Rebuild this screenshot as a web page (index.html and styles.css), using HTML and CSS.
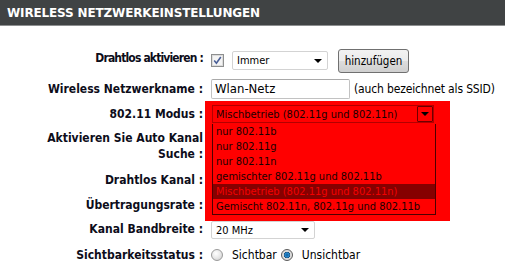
FILE: index.html
```html
<!DOCTYPE html>
<html lang="de">
<head>
<meta charset="utf-8">
<title>Wireless Netzwerkeinstellungen</title>
<link rel="stylesheet" href="styles.css">
</head>
<body>
<div class="header">WIRELESS NETZWERKEINSTELLUNGEN</div>
<div class="form">
  <div class="row r1">
    <div class="label tight">Drahtlos aktivieren :</div>
    <div class="ctrl">
      <span class="checkbox"><svg width="13" height="13" viewBox="0 0 13 13"><rect x="0.5" y="0.5" width="12" height="12" fill="#f4f4f4" stroke="#8e8f8f"/><rect x="1.5" y="1.5" width="10" height="10" fill="none" stroke="#dcdcdc"/><path d="M3.2 6.6 L5.4 9.2 L9.8 3" fill="none" stroke="#4a5f97" stroke-width="1.6"/></svg></span>
      <span class="select sel-immer"><span class="sel-text">Immer</span><span class="arrow"></span></span>
      <span class="button">hinzufügen</span>
    </div>
  </div>
  <div class="row r2">
    <div class="label">Wireless Netzwerkname :</div>
    <div class="ctrl">
      <span class="textbox">Wlan-Netz</span>
      <span class="hint">(auch bezeichnet als SSID)</span>
    </div>
  </div>
  <div class="row r3">
    <div class="label">802.11 Modus :</div>
    <div class="ctrl mode-cell">
      <div class="popup">
        <div class="mode-select"><span class="sel-text">Mischbetrieb (802.11g und 802.11n)</span><span class="mode-btn"><span class="arrow"></span></span></div>
        <ul class="mode-list">
          <li>nur 802.11b</li>
          <li>nur 802.11g</li>
          <li>nur 802.11n</li>
          <li>gemischter 802.11g und 802.11b</li>
          <li class="active">Mischbetrieb (802.11g und 802.11n)</li>
          <li>Gemischt 802.11n, 802.11g und 802.11b</li>
        </ul>
      </div>
    </div>
  </div>
  <div class="row r4">
    <div class="label">Aktivieren Sie Auto Kanal Suche :</div>
    <div class="ctrl"></div>
  </div>
  <div class="row r5">
    <div class="label">Drahtlos Kanal :</div>
    <div class="ctrl"></div>
  </div>
  <div class="row r6">
    <div class="label">Übertragungsrate :</div>
    <div class="ctrl"></div>
  </div>
  <div class="row r7">
    <div class="label">Kanal Bandbreite :</div>
    <div class="ctrl">
      <span class="select sel-mhz"><span class="sel-text">20 MHz</span><span class="arrow"></span></span>
    </div>
  </div>
  <div class="row r8">
    <div class="label">Sichtbarkeitsstatus :</div>
    <div class="ctrl">
      <span class="radio"></span><span class="radio-label">Sichtbar</span>
      <span class="radio checked"></span><span class="radio-label">Unsichtbar</span>
    </div>
  </div>
</div>
</body>
</html>
```

FILE: styles.css
```css
html, body {
  margin: 0;
  padding: 0;
  background: #ffffff;
  width: 505px;
  height: 280px;
  overflow: hidden;
  font-family: "DejaVu Sans Condensed", "DejaVu Sans", sans-serif;
  color: #000;
}

.header {
  height: 25px;
  line-height: 26px;
  background: #404344;
  border-bottom: 1px solid #8d8f90;
  color: #ffffff;
  font-family: "DejaVu Sans", sans-serif;
  font-weight: bold;
  font-size: 12px;
  padding-left: 7px;
  letter-spacing: -0.15px;
  white-space: nowrap;
}

.form {
  padding-top: 20px;
}

.row {
  display: grid;
  grid-template-columns: 205px 1fr;
  align-items: center;
}

.r1 { height: 29px; }
.r2 { height: 28px; }
.r3 { height: 21px; }
.r4 { height: 44px; }
.r5 { height: 24px; }
.r6 { height: 25px; }
.r7 { height: 24px; }
.r8 { height: 27px; }

.label {
  box-sizing: border-box;
  padding-left: 40px;
  padding-right: 2px;
  text-align: right;
  font-weight: bold;
  font-size: 12px;
  line-height: 16px;
  color: #0d0d1a;
}

.label.tight { letter-spacing: -0.85px; }

.r1 .label { margin-top: -5px; }

.ctrl {
  display: flex;
  align-items: center;
  padding-left: 6px;
  font-size: 11px;
  height: 100%;
  white-space: nowrap;
}

.checkbox {
  display: block;
  width: 13px;
  height: 13px;
  margin-top: -1px;
}
.checkbox svg { display: block; }

.select {
  position: relative;
  box-sizing: border-box;
  display: flex;
  align-items: center;
  background: #fff;
  border: 1px solid #d3d3d3;
  border-radius: 2px;
  font-size: 11px;
}
.select .sel-text { padding-left: 4px; }
.select .arrow {
  position: absolute;
  right: 5px;
  top: 50%;
  margin-top: -2px;
}

.arrow {
  width: 0;
  height: 0;
  border-left: 4px solid transparent;
  border-right: 4px solid transparent;
  border-top: 4px solid #000;
}

.sel-immer {
  width: 96px;
  height: 19px;
  margin-left: 8px;
}

.button {
  box-sizing: border-box;
  width: 71px;
  height: 24px;
  margin-left: 10px;
  display: flex;
  align-items: center;
  justify-content: center;
  font-size: 11.5px;
  border: 1px solid #707070;
  border-radius: 3px;
  background: linear-gradient(#f2f2f2 0%, #ebebeb 48%, #dddddd 52%, #cfcfcf 100%);
}

.textbox {
  box-sizing: border-box;
  width: 139px;
  height: 20px;
  border: 1px solid #c2c2c2;
  border-top-color: #a9a9a9;
  border-radius: 2px;
  font-size: 13px;
  line-height: 18px;
  padding-left: 3px;
}

.hint {
  margin-left: 4px;
  font-size: 12px;
  letter-spacing: -0.15px;
}

.mode-cell {
  position: relative;
}

.popup {
  position: absolute;
  left: 0;
  top: -2px;
  width: 245px;
  height: 120px;
  background: #ff0000;
  z-index: 2;
}

.mode-select {
  position: absolute;
  left: 7px;
  top: 4px;
  box-sizing: border-box;
  width: 222px;
  height: 18px;
  border: 1px solid #b30000;
  display: flex;
  align-items: center;
  font-size: 11px;
  color: #1a0000;
}
.mode-select .sel-text { padding-left: 3px; }

.mode-btn {
  position: absolute;
  right: 0;
  top: 0;
  box-sizing: border-box;
  width: 16px;
  height: 16px;
  border: 1px solid #6e0000;
  border-radius: 1px;
  display: flex;
  align-items: center;
  justify-content: center;
}

.mode-list {
  position: absolute;
  left: 7px;
  top: 23px;
  width: 224px;
  box-sizing: border-box;
  margin: 0;
  padding: 0;
  list-style: none;
  border: 1px solid #4d0000;
  border-top: none;
  font-size: 11px;
  color: #1a0000;
}
.mode-list li {
  height: 15px;
  line-height: 15px;
  padding-left: 3px;
}
.mode-list li.active {
  background: #860000;
  color: #f20000;
}

.sel-mhz {
  width: 104px;
  height: 18px;
  margin-top: 2px;
}

.radio {
  box-sizing: border-box;
  width: 12px;
  height: 12px;
  border-radius: 50%;
  border: 1px solid #9a9a9a;
  background: radial-gradient(circle at 40% 35%, #ffffff 0%, #e8e8e8 50%, #c9c9c9 100%);
}
.radio.checked {
  border-color: #5a5a5a;
  background: radial-gradient(circle at 50% 50%, #0f5f9a 0%, #2a8ad0 30%, #1d4f78 42%, #d8d8d8 50%, #ededed 100%);
  margin-left: 4px;
}
.radio-label {
  font-size: 12px;
  margin-left: 9px;
}
```
